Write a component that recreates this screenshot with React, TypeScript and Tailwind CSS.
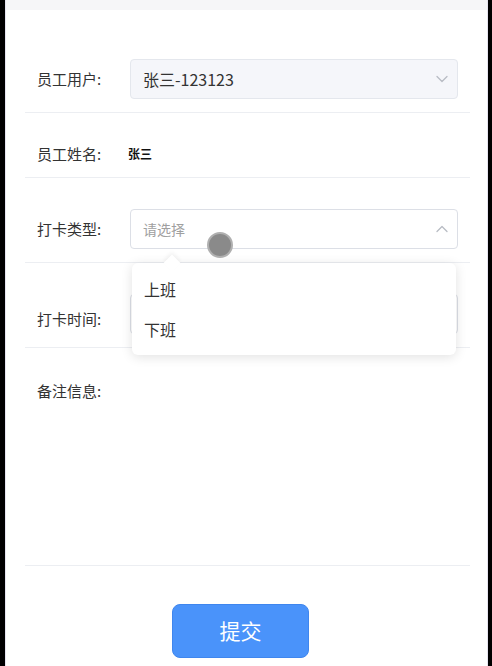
import React from 'react';

const font = { fontFamily: '"Noto Sans CJK SC", "Noto Sans", sans-serif' };

const Chevron: React.FC<{ up?: boolean }> = ({ up }) => (
  <svg width="14" height="14" viewBox="0 0 14 14" fill="none" className="text-[#b8bcc4]">
    <path
      d={up ? 'M2 9.5 L7 4.5 L12 9.5' : 'M2 4.5 L7 9.5 L12 4.5'}
      stroke="currentColor"
      strokeWidth="1.3"
      strokeLinecap="round"
      strokeLinejoin="round"
    />
  </svg>
);

const Row: React.FC<{ label: string; labelClass?: string; children?: React.ReactNode }> = ({
  label,
  labelClass = '',
  children,
}) => (
  <div className="flex items-center border-b border-[#eceef2] pt-[31px] pb-[13px]">
    <div className={`w-[105px] shrink-0 pl-[12px] text-[15px] leading-[20px] text-[#333] ${labelClass}`}>{label}</div>
    <div className="flex-1 pr-[12px]">{children}</div>
  </div>
);

export default function App() {
  return (
    <div className="h-[666px] overflow-hidden bg-black pl-[5px] pr-[4px]" style={font}>
      <div className="relative h-full border-l border-r border-[#e6e4f0] bg-white">
        <div className="h-[10px] bg-[#f6f6f8]" />

        <div className="ml-[19px] mr-[17px] mt-[18px]">
          <Row label="员工用户:">
            <div className="flex h-[40px] items-center justify-between rounded-[4px] border border-[#e4e7ed] bg-[#f5f6fa] pl-[12px] pr-[8px]">
              <span className="text-[16px] text-[#333]">张三-123123</span>
              <Chevron />
            </div>
          </Row>

          <Row label="员工姓名:">
            <div className="flex h-[20px] items-center">
              <span className="-ml-[2px] text-[12px] font-bold leading-[20px] text-[#111]">张三</span>
            </div>
          </Row>

          <Row label="打卡类型:">
            <div className="flex h-[40px] items-center justify-between rounded-[4px] border border-[#dcdfe6] bg-white pl-[12px] pr-[8px]">
              <span className="text-[14px] text-[#a0a0a0]">请选择</span>
              <Chevron up />
            </div>
          </Row>

          <Row label="打卡时间:" labelClass="mt-[10px]">
            <div className="h-[40px] rounded-[4px] border border-[#dcdfe6] bg-white" />
          </Row>

          <div className="h-[218px] border-b border-[#eceef2] pt-[31px]">
            <div className="pl-[12px] text-[15px] leading-[24px] text-[#333]">备注信息:</div>
          </div>

          <div className="flex justify-center pr-[14px] pt-[38px]">
            <button className="h-[54px] w-[137px] rounded-[8px] border border-[#3f86ee] bg-[#4a93fa] text-[21px] text-white">
              提交
            </button>
          </div>
        </div>

        {/* dropdown over the form */}
        <div className="absolute left-[126px] top-[263px] w-[324px] rounded-[6px] bg-white py-[6px] shadow-[0_2px_12px_rgba(0,0,0,0.12)]">
          <div className="absolute -top-[6px] left-[34px] h-[12px] w-[12px] rotate-45 bg-white shadow-[-2px_-2px_4px_rgba(0,0,0,0.05)]" />
          <div className="relative flex h-[40px] items-center pl-[12px] text-[16px] text-[#333]">上班</div>
          <div className="relative flex h-[40px] items-center pl-[12px] text-[16px] text-[#333]">下班</div>
        </div>

        {/* touch indicator */}
        <div className="absolute left-[201px] top-[232px] h-[26px] w-[26px] rounded-full border-2 border-[#b0b0b0] bg-[#8a8a8a]" />
      </div>
    </div>
  );
}
